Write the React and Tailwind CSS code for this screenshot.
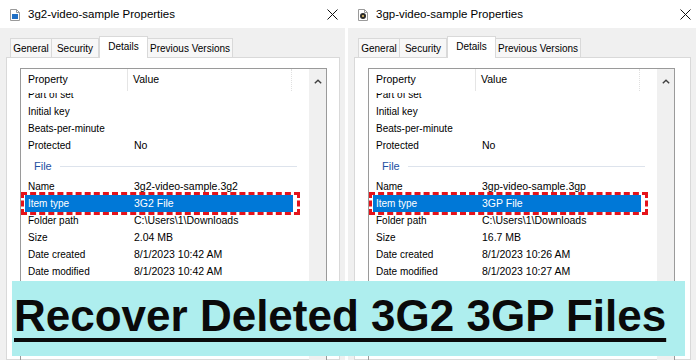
import React from 'react';

const FONT = "font-['Liberation_Sans','Arial',sans-serif]";

function FileIcon({ kind }) {
  return (
    <svg width="10" height="12" viewBox="0 0 10 12" className="shrink-0">
      <path d="M0.5 0.5h6l3 3v8h-9z" fill="#fff" stroke="#9a9a9a" />
      <path d="M6.5 0.5v3h3" fill="none" stroke="#9a9a9a" />
      {kind === 'blue' ? (
        <rect x="2" y="5" width="6" height="5" fill="#1f6fc5" />
      ) : (
        <>
          <circle cx="5" cy="7" r="3" fill="#2b2b2b" />
          <circle cx="5" cy="7" r="1.1" fill="#e8c36a" />
        </>
      )}
    </svg>
  );
}

function CloseIcon() {
  return (
    <svg width="11" height="11" viewBox="0 0 11 11">
      <path d="M0.5 0.5l10 10M10.5 0.5l-10 10" stroke="#111" strokeWidth="1" />
    </svg>
  );
}

function Row({ label, value }) {
  return (
    <div className="flex h-[17px] items-center ml-[4px] w-[268px]">
      <div className="w-[109px] pl-[3px] text-[10px] text-black whitespace-nowrap">{label}</div>
      <div className="text-[10.5px] text-black whitespace-nowrap">{value}</div>
    </div>
  );
}

function Window({ width, title, icon, closePad, data }) {
  const tabs = ['General', 'Security', 'Details', 'Previous Versions'];
  const tabW = { General: 'w-[42px]', Security: 'w-[48px]', Details: 'w-[49px]', 'Previous Versions': 'w-[86px]' };

  return (
    <div className={`${width} h-full flex flex-col shrink-0 overflow-hidden`}>
      {/* title bar */}
      <div className="h-[28px] shrink-0 bg-white flex items-center pl-[10px] pt-[1px]">
        <FileIcon kind={icon} />
        <span className="ml-[8px] text-[11.5px] text-black leading-none">{title}</span>
        <div className={`ml-auto ${closePad}`}>
          <CloseIcon />
        </div>
      </div>

      <div className="flex-1 min-h-0 overflow-hidden bg-[#f0f0f0] flex flex-col pt-[8px] pl-[6px] pr-[5px]">
        {/* tabs */}
        <div className="flex items-end h-[21px] shrink-0 pl-[4px] relative z-10">
          {tabs.map((t) =>
            t === 'Details' ? (
              <div
                key={t}
                className={`${tabW[t]} h-[22px] -mb-[1px] bg-white border border-b-0 border-[#d9d9d9] flex items-center justify-center text-[10px] text-black pb-[2px]`}
              >
                {t}
              </div>
            ) : (
              <div
                key={t}
                className={`${tabW[t]} h-[19px] bg-[#f7f7f7] border border-b-0 border-[#d9d9d9] -ml-px first:ml-0 flex items-center justify-center text-[10px] text-black`}
              >
                {t}
              </div>
            )
          )}
        </div>

        {/* tab page */}
        <div className="flex-1 min-h-0 bg-white border border-[#d9d9d9] pt-[10px] pl-[13px]">
          <div className="w-[307px] h-[300px] border border-[#9a9a9a] flex">
            <div className="flex-1 flex flex-col">
              <div className="h-[24px] shrink-0 flex text-[10.5px] text-black pb-[2px]">
                <div className="w-[107px] pl-[7px] flex items-center border-r border-[#e5e5e5]">Property</div>
                <div className="w-[164px] pl-[5px] flex items-center border-r border-dotted border-[#e0e0e0]">Value</div>
              </div>
              <div className="flex-1 min-h-0 overflow-hidden">
                <div className="-mt-[7px]">
                  <Row label="Part of set" value="" />
                  <Row label="Initial key" value="" />
                  <Row label="Beats-per-minute" value="" />
                  <Row label="Protected" value="No" />
                  <div className="h-[24px] flex items-center ml-[4px] mr-[12px] pl-[9px] pt-[1px]">
                    <span className="text-[11px] text-[#1e50a2]">File</span>
                    <div className="flex-1 ml-[8px] h-px bg-[#dde3ec]" />
                  </div>
                  <Row label="Name" value={data.name} />
                  <div className="relative ml-[4px] w-[268px]">
                    <div className="flex h-[17px] items-center bg-[#0078d7]">
                      <div className="w-[109px] pl-[3px] text-[10px] text-white">Item type</div>
                      <div className="text-[10.5px] text-white">{data.type}</div>
                    </div>
                    <div className="absolute -left-[4px] -top-[3px] -right-[7px] -bottom-[3px] border-[3px] border-dashed border-[#e5131b]" />
                  </div>
                  <Row label="Folder path" value="C:\Users\1\Downloads" />
                  <Row label="Size" value={data.size} />
                  <Row label="Date created" value={data.created} />
                  <Row label="Date modified" value={data.modified} />
                </div>
              </div>
            </div>
            <div className="w-[17px] bg-[#f0f0f0] flex justify-center pt-[10px]">
              <svg width="8" height="5" viewBox="0 0 8 5">
                <path d="M0.8 4.3L4 1.2l3.2 3.1" fill="none" stroke="#404040" strokeWidth="1.4" />
              </svg>
            </div>
          </div>
        </div>
      </div>
    </div>
  );
}

export default function App() {
  return (
    <div className={`relative w-[696px] h-[360px] overflow-hidden bg-white flex ${FONT}`}>
      <Window
        width="w-[345px]"
        title="3g2-video-sample Properties"
        icon="blue"
        closePad="pr-[7px]"
        data={{
          name: '3g2-video-sample.3g2',
          type: '3G2 File',
          size: '2.04 MB',
          created: '8/1/2023 10:42 AM',
          modified: '8/1/2023 10:42 AM',
        }}
      />
      <div className="w-[3px] h-full bg-white shrink-0" />
      <Window
        width="w-[348px]"
        title="3gp-video-sample Properties"
        icon="dark"
        closePad="pr-[5px]"
        data={{
          name: '3gp-video-sample.3gp',
          type: '3GP File',
          size: '16.7 MB',
          created: '8/1/2023 10:26 AM',
          modified: '8/1/2023 10:27 AM',
        }}
      />

      {/* banner laid over the screenshots */}
      <div className="absolute left-[12px] top-[281px] w-[673px] h-[75px] bg-[#aeeeee] pt-[13px] pl-[2px]">
        <h1 className="text-[44px] leading-[44px] font-bold text-[#0a0a0a] underline decoration-[4px] underline-offset-[7px] whitespace-nowrap">
          Recover Deleted 3G2 3GP Files
        </h1>
      </div>
    </div>
  );
}
